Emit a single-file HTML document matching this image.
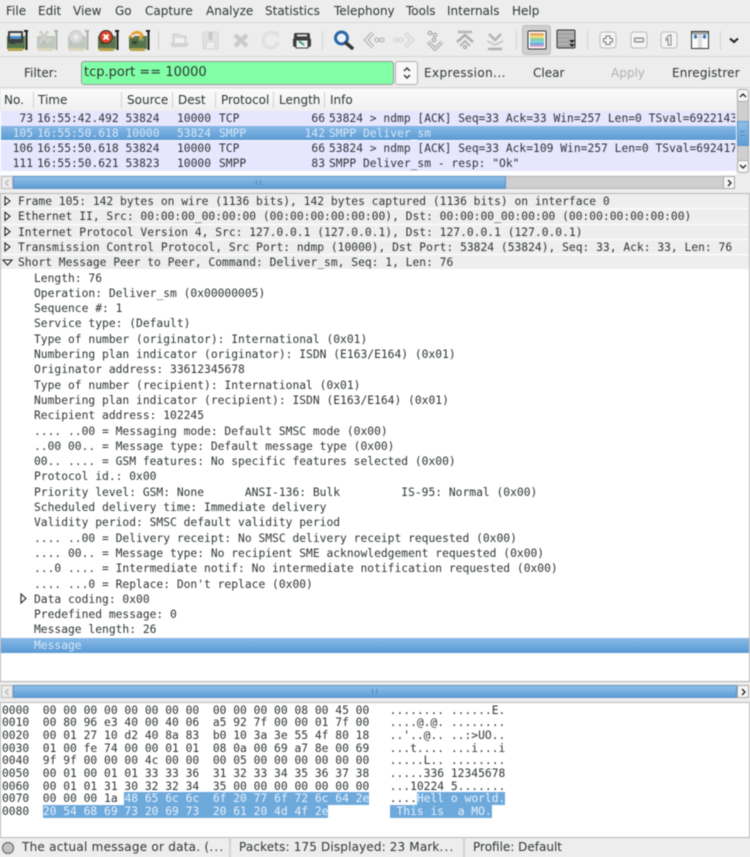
<!DOCTYPE html>
<html><head><meta charset="utf-8"><style>
*{box-sizing:border-box}
html,body{margin:0;padding:0}
body{width:750px;height:857px;position:relative;overflow:hidden;background:#ededed;font-family:"DejaVu Sans",sans-serif;font-size:12px;color:#2e3436;filter:blur(.4px)}
.a{position:absolute;white-space:pre}
.m{font-family:"DejaVu Sans Mono","Liberation Mono",monospace;font-size:11.3px;color:#2e3436}
.ic{position:absolute;top:28px;width:24px;height:24px}
.sep{position:absolute;top:31px;width:1px;height:19px;background:#d2d2d2}
.line{position:absolute;left:0;width:750px;height:1px;background:#d6d6d6}
.th{position:absolute;top:90px;height:20px;line-height:20px;white-space:pre}
.ths{position:absolute;top:92px;width:1px;height:16px;background:#d0d0d0}
.row{position:absolute;left:1px;width:735px;height:14.500px}
.row span{position:absolute;top:0;line-height:15px;white-space:pre;font-family:"DejaVu Sans Mono",monospace;font-size:11.3px}
.sb{position:absolute;background:#cfcfcf;border:1px solid #b8b8b8}
.th1{position:absolute;background:linear-gradient(#90bfe8,#5e9dd5);border:1px solid #5c93c6}
.tr{position:absolute;left:1px;width:748px;height:15.3px;line-height:15.3px;white-space:pre;font-family:"DejaVu Sans Mono",monospace;font-size:11.3px;padding-left:33px}
.t0{padding-left:17px;background:#eeeeee;height:14.3px;width:748px}
.sel{background:#6ea9dc;color:#e6f1fa}
</style></head><body>
<svg width="0" height="0" style="position:absolute"><defs>
<symbol id="nic" viewBox="0 0 24 24">
<rect x="2" y="8" width="18" height="13" fill="#56744c"/>
<rect x="5" y="13" width="5" height="3" fill="#2f4a2c"/>
<rect x="12" y="10" width="5" height="3" fill="#7d9a6e"/>
<rect x="3" y="20" width="15" height="3" fill="#b6a24a"/>
<path d="M21.500 2v20M19 3h4" stroke="#1d1f1f" stroke-width="2" fill="none"/>
</symbol>
</defs></svg>

<!-- Menu -->
<div class="a" style="left:6px;top:4px">File</div>
<div class="a" style="left:38px;top:4px">Edit</div>
<div class="a" style="left:73px;top:4px">View</div>
<div class="a" style="left:115px;top:4px">Go</div>
<div class="a" style="left:145px;top:4px">Capture</div>
<div class="a" style="left:206px;top:4px">Analyze</div>
<div class="a" style="left:265px;top:4px">Statistics</div>
<div class="a" style="left:334px;top:4px">Telephony</div>
<div class="a" style="left:406px;top:4px">Tools</div>
<div class="a" style="left:447px;top:4px">Internals</div>
<div class="a" style="left:512px;top:4px">Help</div>
<div class="line" style="top:22px"></div>
<div class="line" style="top:56px"></div>
<div class="line" style="top:87px"></div>

<!-- Toolbar -->
<svg class="ic" style="left:5px"><use href="#nic"/><rect x="3" y="3" width="15" height="12" rx="1" fill="#3a3f42"/><rect x="5" y="5" width="11" height="3" fill="#e8e8e8"/><rect x="5" y="8" width="11" height="3" fill="#4d8fc4"/></svg>
<svg class="ic" style="left:35px;opacity:.3"><use href="#nic"/><path d="M5 3l8 12M13 3l-8 12" stroke="#8a8a8a" stroke-width="3"/></svg>
<svg class="ic" style="left:66px;opacity:.3"><use href="#nic"/><circle cx="10" cy="9" r="6.500" fill="#aaa" stroke="#777"/><circle cx="10" cy="9" r="2.500" fill="#eee"/></svg>
<svg class="ic" style="left:96px"><use href="#nic"/><circle cx="10" cy="9" r="6.500" fill="#d9442a" stroke="#3a2a22"/><path d="M7.500 6.500l5 5M12.500 6.500l-5 5" stroke="#fff" stroke-width="2"/></svg>
<svg class="ic" style="left:127px"><use href="#nic"/><path d="M4 10a6 6 0 0 1 11-3l-2 4" stroke="#e8a33a" stroke-width="3" fill="none"/><path d="M4 7h3v3z" fill="#f2f2f2"/></svg>
<div class="sep" style="left:158px"></div>
<svg class="ic" style="left:167px;opacity:.75"><path d="M6 6h5l2 2h6v10H6z" fill="#d6d6d6" stroke="#c4c4c4"/><path d="M3 15h19l-2 4H5z" fill="#cacaca"/><rect x="8" y="10" width="9" height="5" fill="#f2f2f2"/></svg>
<svg class="ic" style="left:198px;opacity:.75"><rect x="5" y="4" width="15" height="17" rx="1" fill="#dedede" stroke="#cdcdcd"/><path d="M12.500 4v8" stroke="#bdbdbd" stroke-width="4"/><rect x="8" y="14" width="9" height="7" fill="#eee" stroke="#ccc"/></svg>
<svg class="ic" style="left:229px"><path d="M6 7l12 11M18 7L6 18" stroke="#cbcbcb" stroke-width="4.500"/></svg>
<svg class="ic" style="left:259px"><path d="M19 14a7.500 7.500 0 1 1-3-8" stroke="#e0e0e0" stroke-width="3.500" fill="none"/><path d="M14 3l6 1-1 6z" fill="#e0e0e0"/></svg>
<svg class="ic" style="left:290px"><rect x="4" y="5" width="16" height="6" rx="1.500" fill="#3c3f41"/><rect x="3" y="10" width="18" height="9" rx="2" fill="#3a3d3f"/><rect x="6" y="12" width="12" height="8" fill="#eef2ee" stroke="#444"/><path d="M9 13l5 4" stroke="#3aa07a" stroke-width="2"/><rect x="7" y="6.500" width="10" height="2" fill="#ddd"/></svg>
<div class="sep" style="left:322px"></div>
<svg class="ic" style="left:331px"><circle cx="10.500" cy="10" r="6" fill="#eef3f8" stroke="#2a66a8" stroke-width="3"/><path d="M15 15l6 5" stroke="#34383a" stroke-width="3.500" stroke-linecap="round"/></svg>
<svg class="ic" style="left:362px"><path d="M11 5l-7 7 7 7" stroke="#b4b4b4" stroke-width="4" fill="none"/><path d="M11 5l-7 7 7 7" stroke="#f0f0f0" stroke-width="1.500" fill="none"/><circle cx="15" cy="12" r="2" fill="none" stroke="#aaa"/><circle cx="20" cy="12" r="2" fill="none" stroke="#aaa"/></svg>
<svg class="ic" style="left:392px;opacity:.6"><path d="M13 5l7 7-7 7" stroke="#c4c4c4" stroke-width="4" fill="none"/><path d="M13 5l7 7-7 7" stroke="#f4f4f4" stroke-width="1.500" fill="none"/><circle cx="9" cy="12" r="2" fill="none" stroke="#bbb"/><circle cx="4" cy="12" r="2" fill="none" stroke="#bbb"/></svg>
<svg class="ic" style="left:423px"><path d="M5 14l7 7 7-7" stroke="#aaa" stroke-width="3.500" fill="none"/><path d="M5 14l7 7 7-7" stroke="#f0f0f0" stroke-width="1.200" fill="none"/><circle cx="7" cy="5" r="1.800" fill="none" stroke="#999"/><circle cx="12" cy="7" r="1.800" fill="none" stroke="#999"/><circle cx="11" cy="12" r="1.800" fill="none" stroke="#999"/></svg>
<svg class="ic" style="left:453px"><path d="M5 4h14" stroke="#b5b5b5" stroke-width="2.500"/><path d="M4 14l8-7 8 7" stroke="#adadad" stroke-width="2.500" fill="none"/><path d="M7 18l5-5 5 5" stroke="#b5b5b5" stroke-width="2" fill="none"/><circle cx="12" cy="19" r="1.500" fill="none" stroke="#999"/></svg>
<svg class="ic" style="left:483px"><path d="M6 6l6 6 6-6" stroke="#b5b5b5" stroke-width="2.500" fill="none"/><path d="M4 13l8 4 8-4" stroke="#c0c0c0" stroke-width="1.500" fill="none"/><path d="M5 21h14" stroke="#b0b0b0" stroke-width="2.500"/></svg>
<div class="sep" style="left:516px"></div>
<div style="position:absolute;left:522px;top:25px;width:29px;height:30px;background:#cfcfcf;border:1px solid #bdbdbd;border-radius:3px"></div>
<svg class="ic" style="left:525px"><rect x="3" y="3" width="18" height="18" rx="1" fill="#fff" stroke="#2e3436"/><rect x="5" y="5" width="14" height="2.500" fill="#e9a56a"/><rect x="5" y="7.500" width="14" height="2.500" fill="#f0df7a"/><rect x="5" y="10" width="14" height="2.500" fill="#8fd0a4"/><rect x="5" y="12.500" width="14" height="2.500" fill="#7fd2d8"/><rect x="5" y="15" width="14" height="2" fill="#6fa8dc"/><rect x="5" y="17" width="14" height="2" fill="#d9a0c8"/></svg>
<svg class="ic" style="left:554px"><rect x="3" y="2" width="18" height="18" rx="1" fill="#b0b0b0" stroke="#333"/><path d="M4 6h16M4 10h12M4 14h12M4 18h12" stroke="#9a9a9a"/><path d="M15 12h6l-3 3zM15 16h6l-3 3z" fill="#222"/></svg>
<div class="sep" style="left:587px"></div>
<svg class="ic" style="left:596px"><rect x="4" y="4" width="16" height="16" rx="3" fill="#f4f4f4" stroke="#bbb"/><path d="M10 8h4v2.500h2.500v3.500H14v2.500h-4V14H7.500v-3.500H10z" fill="#f6f6f6" stroke="#777"/></svg>
<svg class="ic" style="left:627px"><rect x="4" y="4" width="16" height="16" rx="3" fill="#f4f4f4" stroke="#bbb"/><rect x="7.500" y="10" width="9" height="4" rx="1" fill="#e8e8e8" stroke="#777"/></svg>
<svg class="ic" style="left:657px"><rect x="4" y="4" width="16" height="16" rx="3" fill="#f4f4f4" stroke="#bbb"/><path d="M14 7v10h-3v-6l-2 1.500v-2L12 7z" fill="#eee" stroke="#888"/></svg>
<svg class="ic" style="left:688px"><rect x="3.500" y="3.500" width="17" height="17" fill="#fafafa" stroke="#2e3436"/><rect x="4" y="4" width="16" height="2.500" fill="#a8a8a8"/><rect x="10" y="6.500" width="4" height="13.500" fill="#dcdcdc"/><path d="M6.500 6.500h2v2h1.500L7.500 11 5 8.500h1.500zM15.500 6.500h2v2H19L16.500 11 14 8.500h1.500z" fill="#2a6fb8"/></svg>
<div class="sep" style="left:720px"></div>
<svg class="ic" style="left:722px"><path d="M8 10.500l4 3.500 4-3.500" stroke="#222" stroke-width="2" fill="none"/></svg>

<!-- Filter bar -->
<div class="a" style="left:24px;top:66px;font-size:12px">Filter:</div>
<div style="position:absolute;left:81px;top:61px;width:313px;height:24px;background:#80ffa6;border:1px solid #9a9a9a;border-radius:3px"></div>
<div class="a" style="left:84px;top:65px;font-size:13px">tcp.port == 10000</div>
<div style="position:absolute;left:395px;top:61px;width:23px;height:24px;background:#f8f8f8;border:1px solid #b0b0b0;border-radius:3px"></div>
<svg style="position:absolute;left:400px;top:64px" width="14" height="18"><path d="M4 7l3-3 3 3M4 11l3 3 3-3" stroke="#2e3436" stroke-width="1.400" fill="none"/></svg>
<div class="a" style="left:424px;top:66px;letter-spacing:.4px">Expression...</div>
<div class="a" style="left:533px;top:66px">Clear</div>
<div class="a" style="left:611px;top:66px;color:#b0b0b0">Apply</div>
<div class="a" style="left:672px;top:66px;letter-spacing:.15px">Enregistrer</div>

<!-- Packet list header -->
<div style="position:absolute;left:1px;top:89px;width:735px;height:22px;background:linear-gradient(#fbfbfb,#f0f0f0)"></div>
<div class="th" style="left:4px">No.</div><div class="th" style="left:38px">Time</div><div class="th" style="left:127px">Source</div><div class="th" style="left:178px">Dest</div><div class="th" style="left:221px">Protocol</div><div class="th" style="left:279px">Length</div><div class="th" style="left:330px">Info</div>
<div class="ths" style="left:33px"></div><div class="ths" style="left:121px"></div><div class="ths" style="left:172px"></div><div class="ths" style="left:215px"></div><div class="ths" style="left:273px"></div><div class="ths" style="left:324px"></div>
<div style="position:absolute;left:0;top:111px;width:736px;height:64px;background:#fff"></div>

<div class="row" style="top:111px;background:#e6e6ff"><span style="right:703px">73</span><span style="left:36px">16:55:42.492</span><span style="left:124.500px">53824</span><span style="left:176px">10000</span><span style="left:218px">TCP</span><span style="right:411px">66</span><span style="left:328px;width:406px;overflow:hidden">53824 &gt; ndmp [ACK] Seq=33 Ack=33 Win=257 Len=0 TSval=6922143333</span></div>
<div class="row" style="top:125.800px;background:linear-gradient(#88b9e6,#5a9ad3);color:#d6e8f7"><span style="right:703px">105</span><span style="left:36px">16:55:50.618</span><span style="left:124.500px">10000</span><span style="left:176px">53824</span><span style="left:218px">SMPP</span><span style="right:411px">142</span><span style="left:328px">SMPP Deliver_sm</span></div>
<div class="row" style="top:141px;background:#e6e6ff"><span style="right:703px">106</span><span style="left:36px">16:55:50.618</span><span style="left:124.500px">53824</span><span style="left:176px">10000</span><span style="left:218px">TCP</span><span style="right:411px">66</span><span style="left:328px;width:406px;overflow:hidden">53824 &gt; ndmp [ACK] Seq=33 Ack=109 Win=257 Len=0 TSval=69241733333</span></div>
<div class="row" style="top:156.300px;background:#e6e6ff"><span style="right:703px">111</span><span style="left:36px">16:55:50.621</span><span style="left:124.500px">53823</span><span style="left:176px">10000</span><span style="left:218px">SMPP</span><span style="right:411px">83</span><span style="left:328px">SMPP Deliver_sm - resp: "Ok"</span></div>

<!-- Vertical scrollbar -->
<div class="sb" style="left:737px;top:89px;width:12px;height:84px;border-radius:3px"></div>
<div style="position:absolute;left:737px;top:89px;width:12px;height:13px;background:#f6f6f6;border:1px solid #aaa;border-radius:3px"></div>
<svg style="position:absolute;left:738px;top:91px" width="10" height="9"><path d="M2 6l3-3 3 3" stroke="#222" stroke-width="1.300" fill="none"/></svg>
<div class="th1" style="left:737px;top:121px;width:12px;height:25px"></div>
<div style="position:absolute;left:740px;top:131px;width:5px;height:5px;border-top:1px solid #4f87bb;border-bottom:1px solid #4f87bb"></div>
<div style="position:absolute;left:737px;top:160px;width:12px;height:13px;background:#f6f6f6;border:1px solid #aaa;border-radius:3px"></div>
<svg style="position:absolute;left:738px;top:162px" width="10" height="9"><path d="M2 3l3 3 3-3" stroke="#222" stroke-width="1.300" fill="none"/></svg>

<!-- Horizontal scrollbar 1 -->
<div class="sb" style="left:1px;top:176px;width:734px;height:13px"></div>
<div style="position:absolute;left:1px;top:176px;width:12px;height:13px;background:#ececec;border:1px solid #bbb"></div>
<svg style="position:absolute;left:3px;top:178px" width="9" height="10"><path d="M5.500 2l-3 3 3 3" stroke="#bbb" stroke-width="1.300" fill="none"/></svg>
<div class="th1" style="left:13px;top:176px;width:493px;height:13px"></div>
<div style="position:absolute;left:256px;top:180px;width:5px;height:5px;border-left:1px solid #4f87bb;border-right:1px solid #4f87bb"></div>
<div style="position:absolute;left:723px;top:176px;width:12px;height:13px;background:#f6f6f6;border:1px solid #aaa;border-radius:2px"></div>
<svg style="position:absolute;left:725px;top:178px" width="9" height="10"><path d="M3 2l3 3-3 3" stroke="#222" stroke-width="1.300" fill="none"/></svg>

<!-- Tree pane -->
<div style="position:absolute;left:0;top:193px;width:750px;height:489px;background:#fff;border:1px solid #b8b8b8;border-bottom:1px solid #b4b4b4"></div>
<div class="tr t0" style="top:194px">Frame 105: 142 bytes on wire (1136 bits), 142 bytes captured (1136 bits) on interface 0</div>
<div class="tr t0" style="top:209.300px">Ethernet II, Src: 00:00:00_00:00:00 (00:00:00:00:00:00), Dst: 00:00:00_00:00:00 (00:00:00:00:00:00)</div>
<div class="tr t0" style="top:224.600px">Internet Protocol Version 4, Src: 127.0.0.1 (127.0.0.1), Dst: 127.0.0.1 (127.0.0.1)</div>
<div class="tr t0" style="top:239.900px">Transmission Control Protocol, Src Port: ndmp (10000), Dst Port: 53824 (53824), Seq: 33, Ack: 33, Len: 76</div>
<div class="tr t0" style="top:255.200px">Short Message Peer to Peer, Command: Deliver_sm, Seq: 1, Len: 76</div>
<div class="tr" style="top:270.500px">Length: 76</div>
<div class="tr" style="top:285.800px">Operation: Deliver_sm (0x00000005)</div>
<div class="tr" style="top:301.100px">Sequence #: 1</div>
<div class="tr" style="top:316.400px">Service type: (Default)</div>
<div class="tr" style="top:331.700px">Type of number (originator): International (0x01)</div>
<div class="tr" style="top:347px">Numbering plan indicator (originator): ISDN (E163/E164) (0x01)</div>
<div class="tr" style="top:362.300px">Originator address: 33612345678</div>
<div class="tr" style="top:377.600px">Type of number (recipient): International (0x01)</div>
<div class="tr" style="top:392.900px">Numbering plan indicator (recipient): ISDN (E163/E164) (0x01)</div>
<div class="tr" style="top:408.200px">Recipient address: 102245</div>
<div class="tr" style="top:423.500px">.... ..00 = Messaging mode: Default SMSC mode (0x00)</div>
<div class="tr" style="top:438.800px">..00 00.. = Message type: Default message type (0x00)</div>
<div class="tr" style="top:454.100px">00.. .... = GSM features: No specific features selected (0x00)</div>
<div class="tr" style="top:469.400px">Protocol id.: 0x00</div>
<div class="tr" style="top:484.700px">Priority level: GSM: None      ANSI-136: Bulk         IS-95: Normal (0x00)</div>
<div class="tr" style="top:500px">Scheduled delivery time: Immediate delivery</div>
<div class="tr" style="top:515.300px">Validity period: SMSC default validity period</div>
<div class="tr" style="top:530.600px">.... ..00 = Delivery receipt: No SMSC delivery receipt requested (0x00)</div>
<div class="tr" style="top:545.900px">.... 00.. = Message type: No recipient SME acknowledgement requested (0x00)</div>
<div class="tr" style="top:561.200px">...0 .... = Intermediate notif: No intermediate notification requested (0x00)</div>
<div class="tr" style="top:576.500px">.... ...0 = Replace: Don't replace (0x00)</div>
<div class="tr" style="top:591.800px">Data coding: 0x00</div>
<div class="tr" style="top:607.100px">Predefined message: 0</div>
<div class="tr" style="top:622.400px">Message length: 26</div>
<div class="tr" style="top:638px;height:15px;line-height:15px;background:linear-gradient(#88b9e6,#5a9ad3);color:#d6e8f7">Message</div>

<svg style="position:absolute;left:0;top:194px" width="30" height="420">
<g fill="#fff" stroke="#222" stroke-width="1.100"><path d="M5 3l5 4-5 4z"/><path d="M5 18.300l5 4-5 4z"/><path d="M5 33.600l5 4-5 4z"/><path d="M5 48.900l5 4-5 4z"/><path d="M3 66l4.500 5 4.500-5z"/><path d="M21 400l5 4.500-5 4.500z"/></g></svg>

<!-- Horizontal scrollbar 2 -->
<div class="sb" style="left:1px;top:685px;width:748px;height:13px"></div>
<div style="position:absolute;left:1px;top:685px;width:12px;height:13px;background:#ececec;border:1px solid #bbb"></div>
<svg style="position:absolute;left:3px;top:687px" width="9" height="10"><path d="M5.500 2l-3 3 3 3" stroke="#bbb" stroke-width="1.300" fill="none"/></svg>
<div class="th1" style="left:13px;top:685px;width:724px;height:13px"></div>
<div style="position:absolute;left:372px;top:689px;width:5px;height:5px;border-left:1px solid #4f87bb;border-right:1px solid #4f87bb"></div>
<div style="position:absolute;left:737px;top:685px;width:12px;height:13px;background:#f6f6f6;border:1px solid #aaa;border-radius:2px"></div>
<svg style="position:absolute;left:739px;top:687px" width="9" height="10"><path d="M3 2l3 3-3 3" stroke="#222" stroke-width="1.300" fill="none"/></svg>

<!-- Hex pane -->
<div style="position:absolute;left:0;top:702px;width:750px;height:136px;background:#fff;border:1px solid #b8b8b8"></div>
<pre class="a m" style="left:2px;top:704.500px;margin:0;line-height:12.700px">0000  00 00 00 00 00 00 00 00  00 00 00 00 08 00 45 00   ........ ......E.
0010  00 80 96 e3 40 00 40 06  a5 92 7f 00 00 01 7f 00   ....@.@. ........
0020  00 01 27 10 d2 40 8a 83  b0 10 3a 3e 55 4f 80 18   ..'..@.. ..:&gt;UO..
0030  01 00 fe 74 00 00 01 01  08 0a 00 69 a7 8e 00 69   ...t.... ...i...i
0040  9f 9f 00 00 00 4c 00 00  00 05 00 00 00 00 00 00   .....L.. ........
0050  00 01 00 01 01 33 33 36  31 32 33 34 35 36 37 38   .....336 12345678
0060  00 01 01 31 30 32 32 34  35 00 00 00 00 00 00 00   ...10224 5.......
0070  00 00 00 1a <span class="sel">48 65 6c 6c  6f 20 77 6f 72 6c 64 2e</span>   ....<span class="sel">Hell o world.</span>
0080  <span class="sel">20 54 68 69 73 20 69 73  20 61 20 4d 4f 2e</span>         <span class="sel"> This is  a MO.</span></pre>

<!-- Status bar -->
<svg style="position:absolute;left:1px;top:841px" width="14" height="14"><circle cx="7" cy="7" r="5.500" fill="#c4c4c4" stroke="#6e6e6e" stroke-width="1.200"/></svg>
<div class="a" style="left:22px;top:840px;letter-spacing:.25px">The actual message or data. (<span style="letter-spacing:1.200px">...</span></div>
<div style="position:absolute;left:229px;top:839px;width:2px;height:18px;border-left:1px dotted #bbb;border-right:1px dotted #bbb"></div>
<div class="a" style="left:239px;top:840px;letter-spacing:.15px">Packets: 175 Displayed: 23 Mark<span style="letter-spacing:1.200px">...</span></div>
<div style="position:absolute;left:463px;top:839px;width:2px;height:18px;border-left:1px dotted #bbb;border-right:1px dotted #bbb"></div>
<div class="a" style="left:473px;top:840px">Profile: Default</div>
</body></html>
